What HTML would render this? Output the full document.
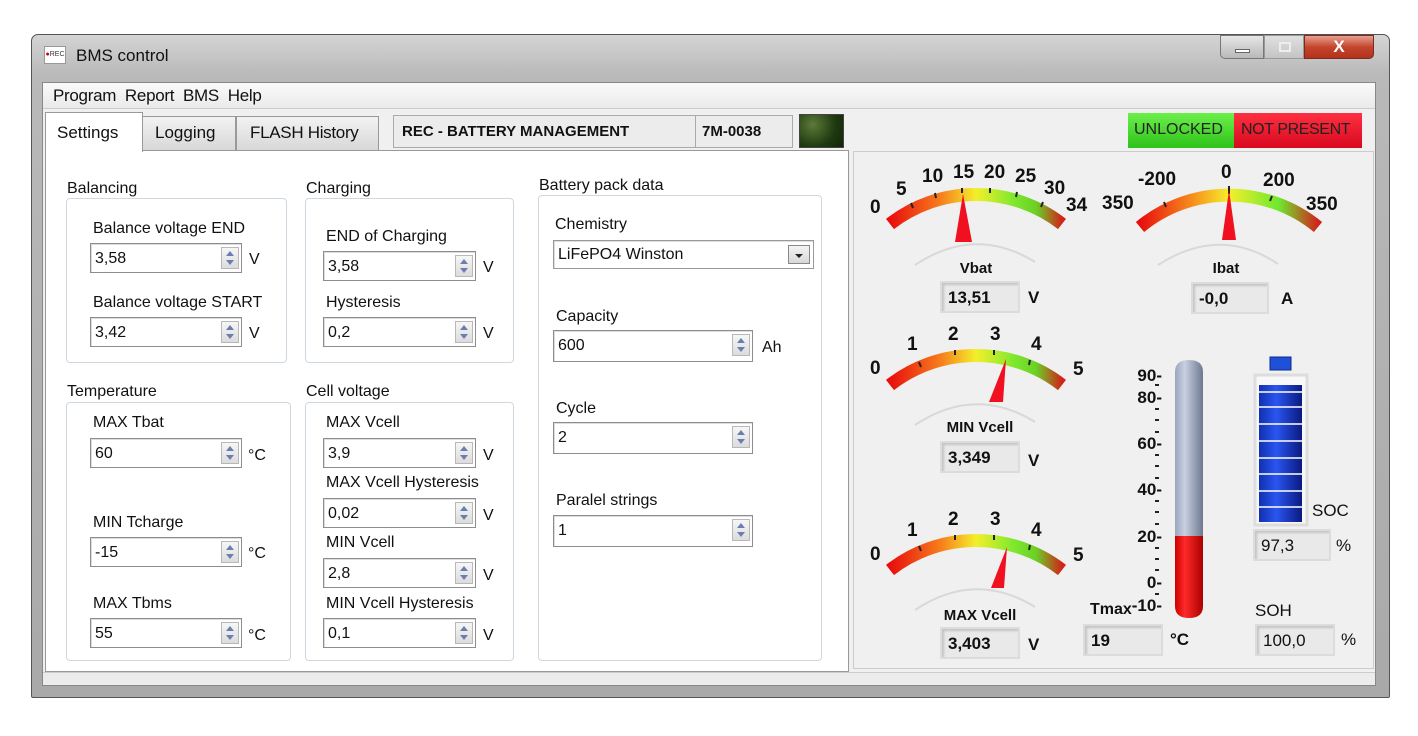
<!DOCTYPE html>
<html><head><meta charset="utf-8"><style>
*{margin:0;padding:0;box-sizing:border-box}
body{width:1418px;height:736px;background:#fff;position:relative;overflow:hidden;font-family:"Liberation Sans",sans-serif;color:#111}
.a{position:absolute}
.t{position:absolute;font-size:16px;white-space:nowrap;line-height:18px}
.f{position:absolute;height:30px;border:1px solid #8d8d8d;background:#fff;box-shadow:inset 1px 1px 0 #ddd}
.f span{position:absolute;left:4px;top:6px;font-size:16px}
.sp{position:absolute;right:2px;top:3px;width:18px;height:22px;border:1px solid #b8b8b8;background:linear-gradient(#f6f6f6,#dcdcdc)}
.sp:before{content:"";position:absolute;left:4px;top:3px;border:4px solid transparent;border-bottom:5px solid #6a7fb0;border-top:0}
.sp:after{content:"";position:absolute;left:4px;bottom:3px;border:4px solid transparent;border-top:5px solid #6a7fb0;border-bottom:0}
.g{position:absolute;border:1px solid #cfd8e0;border-radius:4px}
.vb{position:absolute;height:32px;background:#e9e9e9;border:2px solid #dcdcdc;box-shadow:inset 2px 2px 2px #c4c4c4;font-size:17px;font-weight:bold;padding:5px 6px}
.vu{position:absolute;font-size:17px;font-weight:bold}
</style></head><body>
<!-- window -->
<div class="a" style="left:31px;top:34px;width:1359px;height:664px;border:1px solid #555;border-radius:7px 7px 2px 2px;background:linear-gradient(#d4d4d4,#b9b9b9 40px,#a9a9a9)"></div>
<div class="a" style="left:44px;top:46px;width:22px;height:18px;background:#fff;border:1px solid #999;font-size:7px;line-height:16px;text-align:center;color:#333"><b style="color:#c00">●</b>REC</div>
<div class="t" style="left:76px;top:47px;font-size:17px">BMS control</div>
<div class="a" style="left:1220px;top:35px;width:44px;height:24px;border:1px solid #777;border-radius:0 0 0 5px;background:linear-gradient(#e6e6e6,#b9b9b9)"><div class="a" style="left:14px;top:13px;width:15px;height:4px;background:#fff;border:1px solid #666"></div></div>
<div class="a" style="left:1264px;top:35px;width:40px;height:24px;border:1px solid #999;background:linear-gradient(#e0e0e0,#c4c4c4)"><div class="a" style="left:14px;top:6px;width:12px;height:10px;border:2px solid #eee"></div></div>
<div class="a" style="left:1304px;top:35px;width:70px;height:24px;border:1px solid #7a2a20;border-radius:0 0 5px 0;background:linear-gradient(#e8a090,#c4452e 50%,#b3321c);color:#fff;font-weight:bold;font-size:17px;text-align:center;line-height:22px">X</div>
<!-- client -->
<div class="a" style="left:42px;top:82px;width:1334px;height:604px;background:#f0f0f0;border:1px solid #888"></div>
<div class="a" style="left:43px;top:83px;width:1332px;height:25px;background:linear-gradient(#fafafa,#eaeaea)"></div>
<div class="t" style="left:53px;top:87px;font-size:17px;letter-spacing:-0.3px">Program&nbsp; Report&nbsp; BMS&nbsp; Help</div>
<div class="a" style="left:43px;top:108px;width:1332px;height:1px;background:#ccc"></div>
<!-- tabs -->
<div class="a" style="left:142px;top:116px;width:94px;height:35px;border:1px solid #999;background:linear-gradient(#f2f2f2,#d8d8d8)"></div>
<div class="a" style="left:236px;top:116px;width:143px;height:35px;border:1px solid #999;background:linear-gradient(#f2f2f2,#d8d8d8)"></div>
<div class="a" style="left:45px;top:150px;width:804px;height:522px;background:#fff;border:1px solid #999"></div>
<div class="a" style="left:45px;top:112px;width:98px;height:40px;border:1px solid #999;border-bottom:none;background:#fff"></div>
<div class="t" style="left:57px;top:124px;font-size:17px">Settings</div>
<div class="t" style="left:155px;top:124px;font-size:17px">Logging</div>
<div class="t" style="left:250px;top:124px;font-size:17px;letter-spacing:-0.3px">FLASH History</div>
<div class="a" style="left:393px;top:115px;width:303px;height:33px;border:1px solid #aaa;background:#ececec;font-weight:bold;font-size:15px;padding:7px 8px">REC - BATTERY MANAGEMENT</div>
<div class="a" style="left:695px;top:115px;width:98px;height:33px;border:1px solid #aaa;background:#ececec;font-weight:bold;font-size:15px;padding:7px 6px">7M-0038</div>
<div class="a" style="left:799px;top:114px;width:45px;height:34px;background:radial-gradient(circle at 30% 30%,#5c7a3a,#1e3a10 60%,#112408);border:1px solid #444"></div>
<div class="a" style="left:1128px;top:113px;width:106px;height:35px;background:linear-gradient(#6cf04a,#2ec21a);font-size:16px;padding:8px 6px;color:#222;white-space:nowrap">UNLOCKED</div>
<div class="a" style="left:1234px;top:113px;width:128px;height:35px;background:linear-gradient(#ff3040,#d80820);font-size:16px;padding:8px 7px;color:#222;white-space:nowrap;letter-spacing:-0.4px">NOT PRESENT</div>
<!-- right panel -->
<div class="a" style="left:853px;top:151px;width:521px;height:518px;border:1px solid #ccc;background:#f0f0f0"></div>
<!-- status bar -->
<div class="a" style="left:43px;top:672px;width:1332px;height:13px;background:#ececec;border-top:1px solid #ccc"></div>

<!-- left groups -->
<div class="t" style="left:67px;top:180px">Balancing</div>
<div class="g" style="left:66px;top:198px;width:221px;height:165px"></div>
<div class="t" style="left:306px;top:180px">Charging</div>
<div class="g" style="left:305px;top:198px;width:209px;height:165px"></div>
<div class="t" style="left:67px;top:383px">Temperature</div>
<div class="g" style="left:66px;top:402px;width:225px;height:259px"></div>
<div class="t" style="left:306px;top:383px">Cell voltage</div>
<div class="g" style="left:305px;top:402px;width:209px;height:259px"></div>
<div class="t" style="left:539px;top:177px">Battery pack data</div>
<div class="g" style="left:538px;top:195px;width:284px;height:466px"></div>

<div class="t" style="left:93px;top:220px">Balance voltage END</div>
<div class="f" style="left:90px;top:243px;width:152px"><span>3,58</span><div class="sp"></div></div><div class="t" style="left:249px;top:251px">V</div>
<div class="t" style="left:93px;top:294px">Balance voltage START</div>
<div class="f" style="left:90px;top:317px;width:152px"><span>3,42</span><div class="sp"></div></div><div class="t" style="left:249px;top:325px">V</div>

<div class="t" style="left:326px;top:228px">END of Charging</div>
<div class="f" style="left:323px;top:251px;width:153px"><span>3,58</span><div class="sp"></div></div><div class="t" style="left:483px;top:259px">V</div>
<div class="t" style="left:326px;top:294px">Hysteresis</div>
<div class="f" style="left:323px;top:317px;width:153px"><span>0,2</span><div class="sp"></div></div><div class="t" style="left:483px;top:325px">V</div>

<div class="t" style="left:93px;top:414px">MAX Tbat</div>
<div class="f" style="left:90px;top:438px;width:152px"><span>60</span><div class="sp"></div></div><div class="t" style="left:248px;top:447px">°C</div>
<div class="t" style="left:93px;top:514px">MIN Tcharge</div>
<div class="f" style="left:90px;top:537px;width:152px"><span>-15</span><div class="sp"></div></div><div class="t" style="left:248px;top:545px">°C</div>
<div class="t" style="left:93px;top:595px">MAX Tbms</div>
<div class="f" style="left:90px;top:618px;width:152px"><span>55</span><div class="sp"></div></div><div class="t" style="left:248px;top:627px">°C</div>

<div class="t" style="left:326px;top:414px">MAX Vcell</div>
<div class="f" style="left:323px;top:438px;width:153px"><span>3,9</span><div class="sp"></div></div><div class="t" style="left:483px;top:447px">V</div>
<div class="t" style="left:326px;top:474px">MAX Vcell Hysteresis</div>
<div class="f" style="left:323px;top:498px;width:153px"><span>0,02</span><div class="sp"></div></div><div class="t" style="left:483px;top:507px">V</div>
<div class="t" style="left:326px;top:534px">MIN Vcell</div>
<div class="f" style="left:323px;top:558px;width:153px"><span>2,8</span><div class="sp"></div></div><div class="t" style="left:483px;top:567px">V</div>
<div class="t" style="left:326px;top:595px">MIN Vcell Hysteresis</div>
<div class="f" style="left:323px;top:618px;width:153px"><span>0,1</span><div class="sp"></div></div><div class="t" style="left:483px;top:627px">V</div>

<div class="t" style="left:555px;top:216px">Chemistry</div>
<div class="f" style="left:553px;top:240px;width:261px;height:29px;border-color:#999"><span style="top:5px">LiFePO4 Winston</span><div class="a" style="right:3px;top:4px;width:22px;height:19px;border:1px solid #888;background:linear-gradient(#f4f4f4,#d8d8d8)"><div class="a" style="left:6px;top:8px;border:4px solid transparent;border-top:4px solid #222;border-bottom:0"></div></div></div>
<div class="t" style="left:556px;top:308px">Capacity</div>
<div class="f" style="left:553px;top:330px;width:200px;height:32px"><span>600</span><div class="sp"></div></div><div class="t" style="left:762px;top:339px">Ah</div>
<div class="t" style="left:556px;top:400px">Cycle</div>
<div class="f" style="left:553px;top:422px;width:200px;height:32px"><span>2</span><div class="sp"></div></div>
<div class="t" style="left:556px;top:492px">Paralel strings</div>
<div class="f" style="left:553px;top:515px;width:200px;height:32px"><span>1</span><div class="sp"></div></div>

<!-- gauges -->
<svg class="a" style="left:0;top:0" width="1418" height="736" font-family="Liberation Sans, sans-serif" font-weight="bold" font-size="19" fill="#111">
<defs>
<linearGradient id="gv"><stop offset="0" stop-color="#e80e0e"/><stop offset="0.3" stop-color="#f7801c"/><stop offset="0.5" stop-color="#f4ef2c"/><stop offset="0.72" stop-color="#7ee82e"/><stop offset="0.85" stop-color="#6bd025"/><stop offset="1" stop-color="#d2221a"/></linearGradient>
<linearGradient id="gi"><stop offset="0" stop-color="#e80e0e"/><stop offset="0.3" stop-color="#f7901c"/><stop offset="0.5" stop-color="#f4ef2c"/><stop offset="0.78" stop-color="#6ee82e"/><stop offset="1" stop-color="#d2221a"/></linearGradient>
<linearGradient id="tg" x1="0" x2="1"><stop offset="0" stop-color="#9aa6bc"/><stop offset="0.35" stop-color="#c8d0e0"/><stop offset="1" stop-color="#6d7890"/></linearGradient>
<linearGradient id="tr" x1="0" x2="1"><stop offset="0" stop-color="#c00"/><stop offset="0.35" stop-color="#ff2a2a"/><stop offset="1" stop-color="#a00"/></linearGradient>
<linearGradient id="bb" x1="0" x2="1"><stop offset="0" stop-color="#1230b0"/><stop offset="0.4" stop-color="#2a55f0"/><stop offset="1" stop-color="#0a1a80"/></linearGradient>
</defs>
<!-- Vbat -->
<path d="M890 224 A140 140 0 0 1 1062 224" stroke="url(#gv)" stroke-width="13" fill="none"/>
<g stroke="#222" stroke-width="2"><path d="M911 203l2 5M935 193l1 5M962 188v5M990 188v5M1017 192l-1 5M1043 202l-2 5"/></g>
<path d="M915 265 Q975 225 1035 262" stroke="#d8d8d8" stroke-width="2" fill="none"/>
<polygon points="963,194 955,242 972,242" fill="#f01020"/>
<text x="870" y="213">0</text><text x="896" y="195">5</text><text x="922" y="182">10</text><text x="953" y="178">15</text><text x="984" y="178">20</text><text x="1015" y="182">25</text><text x="1044" y="194">30</text><text x="1066" y="211">34</text>
<text x="976" y="273" text-anchor="middle" font-size="15">Vbat</text>
<!-- Ibat -->
<path d="M1140 227 A140 140 0 0 1 1318 227" stroke="url(#gi)" stroke-width="13" fill="none"/>
<g stroke="#222" stroke-width="2"><path d="M1164 202l2 5M1229 186v8M1272 196l-2 5"/></g>
<path d="M1158 265 Q1220 225 1278 264" stroke="#d8d8d8" stroke-width="2" fill="none"/>
<polygon points="1229,190 1222,240 1236,240" fill="#f01020"/>
<text x="1102" y="209">350</text><text x="1138" y="185">-200</text><text x="1221" y="178">0</text><text x="1263" y="186">200</text><text x="1306" y="210">350</text>
<text x="1226" y="273" text-anchor="middle" font-size="15">Ibat</text>
<!-- MIN Vcell -->
<path d="M890 385 A140 140 0 0 1 1062 385" stroke="url(#gv)" stroke-width="13" fill="none"/>
<g stroke="#222" stroke-width="2"><path d="M919 362l2 5M955 350v5M994 350v5M1030 360l-1 5"/></g>
<path d="M915 425 Q975 385 1035 422" stroke="#d8d8d8" stroke-width="2" fill="none"/>
<polygon points="1006,359 989,402 1003,402" fill="#f01020"/>
<text x="870" y="374">0</text><text x="907" y="350">1</text><text x="948" y="340">2</text><text x="990" y="340">3</text><text x="1031" y="350">4</text><text x="1073" y="375">5</text>
<text x="980" y="432" text-anchor="middle" font-size="15">MIN Vcell</text>
<!-- MAX Vcell -->
<path d="M890 570 A140 140 0 0 1 1062 570" stroke="url(#gv)" stroke-width="13" fill="none"/>
<g stroke="#222" stroke-width="2"><path d="M919 546l2 5M955 535v5M994 535v5M1030 545l-1 5"/></g>
<path d="M915 610 Q975 570 1035 607" stroke="#d8d8d8" stroke-width="2" fill="none"/>
<polygon points="1007,547 991,588 1004,588" fill="#f01020"/>
<text x="870" y="560">0</text><text x="907" y="536">1</text><text x="948" y="525">2</text><text x="990" y="525">3</text><text x="1031" y="536">4</text><text x="1073" y="561">5</text>
<text x="980" y="620" text-anchor="middle" font-size="15">MAX Vcell</text>
<!-- thermometer -->
<path d="M1175 372 Q1175 360 1189 360 Q1203 360 1203 372 L1203 536 L1175 536 Z" fill="url(#tg)"/>
<path d="M1175 536 L1203 536 L1203 606 Q1203 618 1189 618 Q1175 618 1175 606 Z" fill="url(#tr)"/>
<g font-size="17" text-anchor="end">
<text x="1162" y="381">90-</text><text x="1162" y="403">80-</text><text x="1162" y="449">60-</text><text x="1162" y="495">40-</text><text x="1162" y="542">20-</text><text x="1162" y="588">0-</text><text x="1162" y="611">-10-</text></g>
<g stroke="#222" stroke-width="2">
<path d="M1155 385h4M1155 409h4M1155 420h4M1155 432h4M1155 455h4M1155 466h4M1155 478h4M1155 501h4M1155 512h4M1155 524h4M1155 548h4M1155 559h4M1155 570h4M1155 594h4"/></g>
<text x="1090" y="614" font-size="16">Tmax</text>
<!-- battery -->
<rect x="1270" y="357" width="21" height="13" fill="#2050d8" stroke="#0a2a90"/>
<rect x="1255" y="375" width="52" height="150" fill="#f8f8f8" stroke="#ddd" stroke-width="3"/>
<rect x="1259" y="385" width="43" height="137" fill="url(#bb)"/>
<g stroke="#fff" stroke-width="1.5"><path d="M1259 392h43M1259 407h43M1259 424h43M1259 441h43M1259 458h43M1259 474h43M1259 491h43M1259 507h43"/></g>
<text x="1312" y="516" font-weight="normal" font-size="17">SOC</text>
<text x="1336" y="551" font-weight="normal" font-size="17">%</text>
<text x="1255" y="616" font-weight="normal" font-size="17">SOH</text>
<text x="1341" y="645" font-weight="normal" font-size="17">%</text>
</svg>
<div class="vb" style="left:940px;top:281px;width:80px">13,51</div><div class="vu" style="left:1028px;top:288px">V</div>
<div class="vb" style="left:1191px;top:282px;width:78px">-0,0</div><div class="vu" style="left:1281px;top:289px">A</div>
<div class="vb" style="left:940px;top:441px;width:80px">3,349</div><div class="vu" style="left:1028px;top:451px">V</div>
<div class="vb" style="left:940px;top:627px;width:80px">3,403</div><div class="vu" style="left:1028px;top:635px">V</div>
<div class="vb" style="left:1083px;top:624px;width:80px">19</div><div class="vu" style="left:1170px;top:630px">°C</div>
<div class="vb" style="left:1253px;top:529px;width:78px;font-weight:normal">97,3</div>
<div class="vb" style="left:1255px;top:624px;width:80px;font-weight:normal">100,0</div>
</body></html>
